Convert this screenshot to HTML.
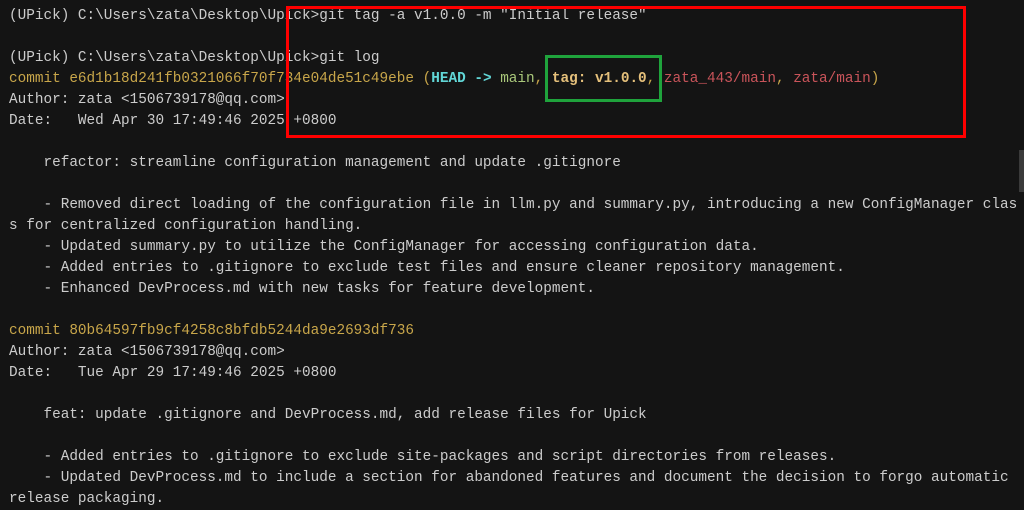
<!DOCTYPE html>
<html><head><meta charset="utf-8"><style>
html,body{margin:0;padding:0;background:#141414;width:1024px;height:510px;overflow:hidden}
pre{position:absolute;left:9px;top:6px;margin:0;font-family:"Liberation Mono",monospace;font-size:14.37px;line-height:21px;color:#cccccc;white-space:pre}
.y{color:#c8a64a}.c{color:#61d6d6;font-weight:bold}.g{color:#a9c77a}.t{color:#e5c07b;font-weight:bold}.r{color:#c9545a}
.box{position:absolute;box-sizing:border-box}
</style></head><body>
<pre>(UPick) C:\Users\zata\Desktop\Upick>git tag -a v1.0.0 -m "Initial release"

(UPick) C:\Users\zata\Desktop\Upick>git log
<span class="y">commit e6d1b18d241fb0321066f70f734e04de51c49ebe (</span><span class="c">HEAD -&gt; </span><span class="g">main</span><span class="y">, </span><span class="t">tag: v1.0.0</span><span class="y">, </span><span class="r">zata_443/main</span><span class="y">, </span><span class="r">zata/main</span><span class="y">)</span>
Author: zata &lt;1506739178@qq.com&gt;
Date:   Wed Apr 30 17:49:46 2025 +0800

    refactor: streamline configuration management and update .gitignore

    - Removed direct loading of the configuration file in llm.py and summary.py, introducing a new ConfigManager clas
s for centralized configuration handling.
    - Updated summary.py to utilize the ConfigManager for accessing configuration data.
    - Added entries to .gitignore to exclude test files and ensure cleaner repository management.
    - Enhanced DevProcess.md with new tasks for feature development.

<span class="y">commit 80b64597fb9cf4258c8bfdb5244da9e2693df736</span>
Author: zata &lt;1506739178@qq.com&gt;
Date:   Tue Apr 29 17:49:46 2025 +0800

    feat: update .gitignore and DevProcess.md, add release files for Upick

    - Added entries to .gitignore to exclude site-packages and script directories from releases.
    - Updated DevProcess.md to include a section for abandoned features and document the decision to forgo automatic
release packaging.</pre>
<div class="box" style="left:286px;top:6px;width:680px;height:132px;border:3px solid #ff0000"></div>
<div class="box" style="left:545px;top:55px;width:117px;height:47px;border:3px solid #1fa33c"></div>
<div class="box" style="left:1019px;top:150px;width:5px;height:42px;background:#3a3a3a"></div>
</body></html>
